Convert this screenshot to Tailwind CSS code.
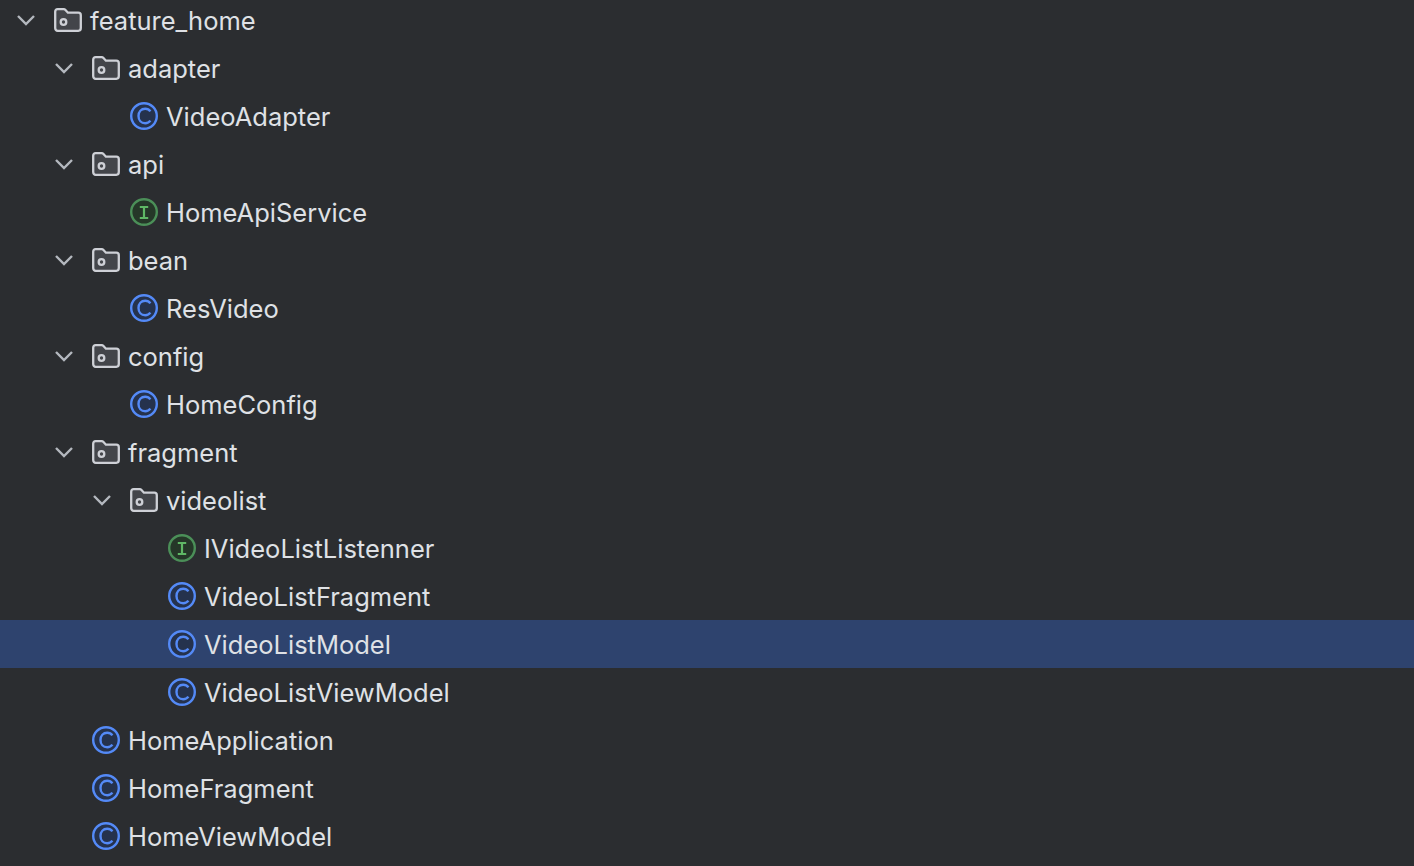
<!DOCTYPE html>
<html lang="en">
<head>
  <meta charset="UTF-8" />
  <title>Project tree</title>
  <script src="https://cdn.jsdelivr.net/npm/@tailwindcss/browser@4"></script>
</head>
<body class="bg-[#2b2d30] h-[866px] overflow-hidden font-['Inter',sans-serif] text-[25.5px] text-[#dfe1e5]">

  <svg class="hidden">
    <symbol id="chevron" viewBox="0 0 20 12">
      <path d="M2 2l8 8 8-8" fill="none" stroke="#b4b8bf" stroke-width="2.400"/>
    </symbol>
    <symbol id="folder" viewBox="0 0 28 24">
      <path d="M3.700 1.200h6c.7 0 1.300.3 1.800.8l2.400 2.700h10.400c1.700 0 2.500 1 2.500 2.500v12.900c0 1.500-.9 2.700-2.500 2.700h-20.600c-1.600 0-2.500-1.200-2.500-2.700v-16.400c0-1.500.9-2.500 2.500-2.500z" fill="#43454a" stroke="#ced0d6" stroke-width="2.300"/>
      <circle cx="9.500" cy="14" r="2.800" fill="none" stroke="#ced0d6" stroke-width="2.300"/>
    </symbol>
    <symbol id="cls" viewBox="0 0 28 28">
      <circle cx="14" cy="14" r="12.800" fill="#25324d" stroke="#548af7" stroke-width="2.400"/>
      <path d="M20.400 9.400c-1.200-1.700-3-2.600-5.200-2.600-4 0-6.700 3-6.700 7.200s2.700 7.200 6.700 7.200c2.200 0 4-.9 5.200-2.600" fill="none" stroke="#548af7" stroke-width="2.400"/>
    </symbol>
    <symbol id="iface" viewBox="0 0 28 28">
      <circle cx="14" cy="14" r="12.800" fill="#253728" stroke="#4b8f58" stroke-width="2.400"/>
      <path d="M9.800 9h8.400M9.800 20h8.400M14 9v11" fill="none" stroke="#5fb865" stroke-width="2.200"/>
    </symbol>
  </svg>

  <div class="-mt-[4px] flex flex-col">

    <div class="h-[48px] flex items-center pl-[16px]">
      <svg class="w-[20px] h-[12px] mr-[18px]"><use href="#chevron"/></svg>
      <svg class="w-[28px] h-[24px] mr-[8px]"><use href="#folder"/></svg>
      <span class="pt-[2px]">feature_home</span>
    </div>

    <div class="h-[48px] flex items-center pl-[54px]">
      <svg class="w-[20px] h-[12px] mr-[18px]"><use href="#chevron"/></svg>
      <svg class="w-[28px] h-[24px] mr-[8px]"><use href="#folder"/></svg>
      <span class="pt-[2px]">adapter</span>
    </div>
    <div class="h-[48px] flex items-center pl-[130px]">
      <svg class="w-[28px] h-[28px] mr-[8px]"><use href="#cls"/></svg>
      <span class="pt-[2px]">VideoAdapter</span>
    </div>

    <div class="h-[48px] flex items-center pl-[54px]">
      <svg class="w-[20px] h-[12px] mr-[18px]"><use href="#chevron"/></svg>
      <svg class="w-[28px] h-[24px] mr-[8px]"><use href="#folder"/></svg>
      <span class="pt-[2px]">api</span>
    </div>
    <div class="h-[48px] flex items-center pl-[130px]">
      <svg class="w-[28px] h-[28px] mr-[8px]"><use href="#iface"/></svg>
      <span class="pt-[2px]">HomeApiService</span>
    </div>

    <div class="h-[48px] flex items-center pl-[54px]">
      <svg class="w-[20px] h-[12px] mr-[18px]"><use href="#chevron"/></svg>
      <svg class="w-[28px] h-[24px] mr-[8px]"><use href="#folder"/></svg>
      <span class="pt-[2px]">bean</span>
    </div>
    <div class="h-[48px] flex items-center pl-[130px]">
      <svg class="w-[28px] h-[28px] mr-[8px]"><use href="#cls"/></svg>
      <span class="pt-[2px]">ResVideo</span>
    </div>

    <div class="h-[48px] flex items-center pl-[54px]">
      <svg class="w-[20px] h-[12px] mr-[18px]"><use href="#chevron"/></svg>
      <svg class="w-[28px] h-[24px] mr-[8px]"><use href="#folder"/></svg>
      <span class="pt-[2px]">config</span>
    </div>
    <div class="h-[48px] flex items-center pl-[130px]">
      <svg class="w-[28px] h-[28px] mr-[8px]"><use href="#cls"/></svg>
      <span class="pt-[2px]">HomeConfig</span>
    </div>

    <div class="h-[48px] flex items-center pl-[54px]">
      <svg class="w-[20px] h-[12px] mr-[18px]"><use href="#chevron"/></svg>
      <svg class="w-[28px] h-[24px] mr-[8px]"><use href="#folder"/></svg>
      <span class="pt-[2px]">fragment</span>
    </div>
    <div class="h-[48px] flex items-center pl-[92px]">
      <svg class="w-[20px] h-[12px] mr-[18px]"><use href="#chevron"/></svg>
      <svg class="w-[28px] h-[24px] mr-[8px]"><use href="#folder"/></svg>
      <span class="pt-[2px]">videolist</span>
    </div>
    <div class="h-[48px] flex items-center pl-[168px]">
      <svg class="w-[28px] h-[28px] mr-[8px]"><use href="#iface"/></svg>
      <span class="pt-[2px]">IVideoListListenner</span>
    </div>
    <div class="h-[48px] flex items-center pl-[168px]">
      <svg class="w-[28px] h-[28px] mr-[8px]"><use href="#cls"/></svg>
      <span class="pt-[2px]">VideoListFragment</span>
    </div>
    <div class="h-[48px] flex items-center pl-[168px] bg-[#2e436e]">
      <svg class="w-[28px] h-[28px] mr-[8px]"><use href="#cls"/></svg>
      <span class="pt-[2px]">VideoListModel</span>
    </div>
    <div class="h-[48px] flex items-center pl-[168px]">
      <svg class="w-[28px] h-[28px] mr-[8px]"><use href="#cls"/></svg>
      <span class="pt-[2px]">VideoListViewModel</span>
    </div>

    <div class="h-[48px] flex items-center pl-[92px]">
      <svg class="w-[28px] h-[28px] mr-[8px]"><use href="#cls"/></svg>
      <span class="pt-[2px]">HomeApplication</span>
    </div>
    <div class="h-[48px] flex items-center pl-[92px]">
      <svg class="w-[28px] h-[28px] mr-[8px]"><use href="#cls"/></svg>
      <span class="pt-[2px]">HomeFragment</span>
    </div>
    <div class="h-[48px] flex items-center pl-[92px]">
      <svg class="w-[28px] h-[28px] mr-[8px]"><use href="#cls"/></svg>
      <span class="pt-[2px]">HomeViewModel</span>
    </div>

  </div>

</body>
</html>
